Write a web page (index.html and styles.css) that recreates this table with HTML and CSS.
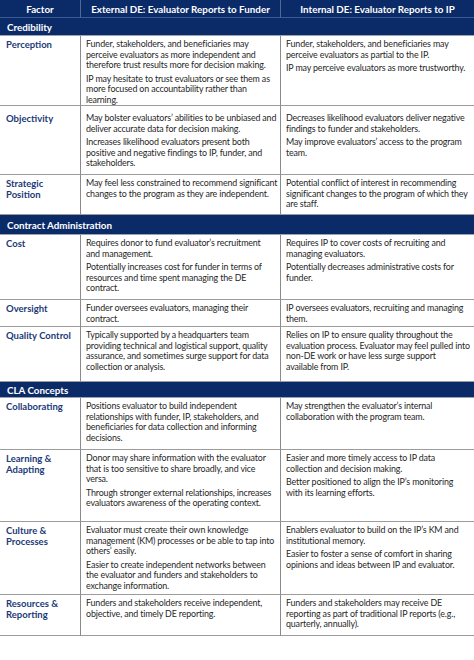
FILE: index.html
```html
<!DOCTYPE html>
<html>
<head>
<meta charset="utf-8">
<link rel="stylesheet" href="styles.css">
</head>
<body>
<div class="table">
  <div class="hd hd-first">Factor</div>
  <div class="hd">External DE: Evaluator Reports to Funder</div>
  <div class="hd">Internal DE: Evaluator Reports to IP</div>

  <div class="sec">Credibility</div>

  <div class="fac">Perception</div>
  <div class="cell">
    <p>Funder, stakeholders, and beneficiaries may<br>perceive evaluators as more independent and<br>therefore trust results more for decision making.</p>
    <p>IP may hesitate to trust evaluators or see them as<br>more focused on accountability rather than<br>learning.</p>
  </div>
  <div class="cell">
    <p>Funder, stakeholders, and beneficiaries may<br>perceive evaluators as partial to the IP.</p>
    <p>IP may perceive evaluators as more trustworthy.</p>
  </div>

  <div class="fac tall">Objectivity</div>
  <div class="cell tall">
    <p>May bolster evaluators’ abilities to be unbiased and<br>deliver accurate data for decision making.</p>
    <p>Increases likelihood evaluators present both<br>positive and negative findings to IP, funder, and<br>stakeholders.</p>
  </div>
  <div class="cell tall">
    <p>Decreases likelihood evaluators deliver negative<br>findings to funder and stakeholders.</p>
    <p>May improve evaluators’ access to the program<br>team.</p>
  </div>

  <div class="fac">Strategic<br>Position</div>
  <div class="cell">
    <p>May feel less constrained to recommend significant<br>changes to the program as they are independent.</p>
  </div>
  <div class="cell">
    <p>Potential conflict of interest in recommending<br>significant changes to the program of which they<br>are staff.</p>
  </div>

  <div class="sec">Contract Administration</div>

  <div class="fac">Cost</div>
  <div class="cell">
    <p>Requires donor to fund evaluator’s recruitment<br>and management.</p>
    <p>Potentially increases cost for funder in terms of<br>resources and time spent managing the DE<br>contract.</p>
  </div>
  <div class="cell">
    <p>Requires IP to cover costs of recruiting and<br>managing evaluators.</p>
    <p>Potentially decreases administrative costs for<br>funder.</p>
  </div>

  <div class="fac">Oversight</div>
  <div class="cell">
    <p>Funder oversees evaluators, managing their<br>contract.</p>
  </div>
  <div class="cell">
    <p>IP oversees evaluators, recruiting and managing<br>them.</p>
  </div>

  <div class="fac">Quality Control</div>
  <div class="cell">
    <p>Typically supported by a headquarters team<br>providing technical and logistical support, quality<br>assurance, and sometimes surge support for data<br>collection or analysis.</p>
  </div>
  <div class="cell">
    <p>Relies on IP to ensure quality throughout the<br>evaluation process. Evaluator may feel pulled into<br>non-DE work or have less surge support<br>available from IP.</p>
  </div>

  <div class="sec">CLA Concepts</div>

  <div class="fac">Collaborating</div>
  <div class="cell">
    <p>Positions evaluator to build independent<br>relationships with funder, IP, stakeholders, and<br>beneficiaries for data collection and informing<br>decisions.</p>
  </div>
  <div class="cell">
    <p>May strengthen the evaluator’s internal<br>collaboration with the program team.</p>
  </div>

  <div class="fac">Learning &amp;<br>Adapting</div>
  <div class="cell">
    <p>Donor may share information with the evaluator<br>that is too sensitive to share broadly, and vice<br>versa.</p>
    <p>Through stronger external relationships, increases<br>evaluators awareness of the operating context.</p>
  </div>
  <div class="cell">
    <p>Easier and more timely access to IP data<br>collection and decision making.</p>
    <p>Better positioned to align the IP’s monitoring<br>with its learning efforts.</p>
  </div>

  <div class="fac">Culture &amp;<br>Processes</div>
  <div class="cell">
    <p>Evaluator must create their own knowledge<br>management (KM) processes or be able to tap into<br>others’ easily.</p>
    <p>Easier to create independent networks between<br>the evaluator and funders and stakeholders to<br>exchange information.</p>
  </div>
  <div class="cell">
    <p>Enablers evaluator to build on the IP’s KM and<br>institutional memory.</p>
    <p>Easier to foster a sense of comfort in sharing<br>opinions and ideas between IP and evaluator.</p>
  </div>

  <div class="fac">Resources &amp;<br>Reporting</div>
  <div class="cell">
    <p>Funders and stakeholders receive independent,<br>objective, and timely DE reporting.</p>
  </div>
  <div class="cell">
    <p>Funders and stakeholders may receive DE<br>reporting as part of traditional IP reports (e.g.,<br>quarterly, annually).</p>
  </div>
</div>
</body>
</html>
```

FILE: styles.css
```css
html, body {
  margin: 0;
  padding: 0;
  background: #ffffff;
}

body {
  font-family: "Lato", "Liberation Sans", sans-serif;
  color: #1f1f1f;
}

.table {
  display: grid;
  width: 474px;
  grid-template-columns: 80px 200px 194px;
  grid-template-rows: 18px 18px 70px 69px 40px 20px 65px 27px 55px 16px 52px 72px 73px 41px;
}

.hd {
  background: #0b2b68;
  color: #ffffff;
  font-weight: 700;
  font-size: 9.8px;
  display: flex;
  align-items: center;
  justify-content: center;
  border-left: 1px solid #4d6a9e;
  border-bottom: 1px solid #3a5a92;
  box-sizing: border-box;
}

.hd-first {
  border-left: none;
}

.sec {
  grid-column: 1 / 4;
  background: #0b2b68;
  color: #ffffff;
  font-weight: 700;
  font-size: 9.8px;
  display: flex;
  align-items: center;
  padding-left: 7px;
  border-bottom: 1px solid #9aa3b3;
  box-sizing: border-box;
}

.fac {
  color: #1c3a78;
  font-weight: 700;
  font-size: 9.5px;
  line-height: 11px;
  padding: 3px 0 0 6px;
  border-bottom: 1px solid #9c9c9c;
  box-sizing: border-box;
}

.cell {
  font-size: 8.9px;
  line-height: 10.6px;
  padding: 3px 0 0 5px;
  border-left: 1px solid #8a8a8a;
  border-bottom: 1px solid #9c9c9c;
  box-sizing: border-box;
  letter-spacing: -0.15px;
  overflow: hidden;
}

.tall {
  padding-top: 7px;
}

.cell p {
  margin: 0 0 3px 0;
  white-space: nowrap;
}
```
